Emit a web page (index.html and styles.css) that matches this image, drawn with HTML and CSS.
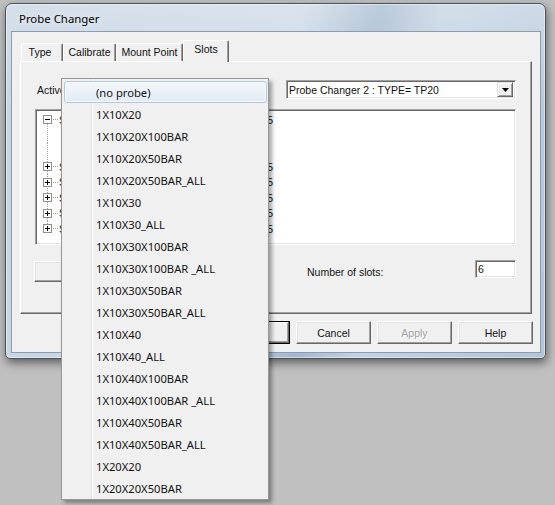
FILE: index.html
```html
<!DOCTYPE html>
<html>
<head>
<meta charset="utf-8">
<title>Probe Changer</title>
<link rel="stylesheet" href="styles.css">
</head>
<body>
<div class="window">
  <div class="titlebar">Probe Changer</div>
  <div class="client">
    <div class="tabs">
      <div class="tab tab-type">Type</div>
      <div class="tab tab-cal">Calibrate</div>
      <div class="tab tab-mount">Mount Point</div>
      <div class="tab tab-slots active">Slots</div>
    </div>
    <div class="panel">
      <div class="row-top">
        <span class="label-active">Active probe changer:</span>
        <div class="combo">
          <span class="combo-text">Probe Changer 2 : TYPE= TP20</span>
          <span class="combo-btn"><svg width="7" height="4" viewBox="0 0 7 4"><path d="M0 0H7L3.5 4Z" fill="#000"/></svg></span>
        </div>
      </div>
      <div class="tree">
        <div class="node first">
          <span class="lines"><svg class="exp" width="9" height="9" viewBox="0 0 9 9"><rect x="0.5" y="0.5" width="8" height="8" fill="#fff" stroke="#8f8f8f"/><path d="M2 4.5H7" stroke="#000"/></svg></span>
          <span class="dash"></span>
          <span class="node-text"><span>Slot 1 : TP20</span><span>Probe 5</span></span>
        </div>
        <div class="node child">
          <span class="lines vert"></span>
          <span class="child-text">Probe</span>
        </div>
        <div class="node child">
          <span class="lines vert"></span>
          <span class="child-text">Tip</span>
        </div>
        <div class="node">
          <span class="lines vert"><svg class="exp" width="9" height="9" viewBox="0 0 9 9"><rect x="0.5" y="0.5" width="8" height="8" fill="#fff" stroke="#8f8f8f"/><path d="M2 4.5H7M4.5 2V7" stroke="#000"/></svg></span>
          <span class="dash"></span>
          <span class="node-text"><span>Slot 2 : TP20</span><span>Probe 5</span></span>
        </div>
        <div class="node">
          <span class="lines vert"><svg class="exp" width="9" height="9" viewBox="0 0 9 9"><rect x="0.5" y="0.5" width="8" height="8" fill="#fff" stroke="#8f8f8f"/><path d="M2 4.5H7M4.5 2V7" stroke="#000"/></svg></span>
          <span class="dash"></span>
          <span class="node-text"><span>Slot 3 : TP20</span><span>Probe 5</span></span>
        </div>
        <div class="node">
          <span class="lines vert"><svg class="exp" width="9" height="9" viewBox="0 0 9 9"><rect x="0.5" y="0.5" width="8" height="8" fill="#fff" stroke="#8f8f8f"/><path d="M2 4.5H7M4.5 2V7" stroke="#000"/></svg></span>
          <span class="dash"></span>
          <span class="node-text"><span>Slot 4 : TP20</span><span>Probe 5</span></span>
        </div>
        <div class="node">
          <span class="lines vert"><svg class="exp" width="9" height="9" viewBox="0 0 9 9"><rect x="0.5" y="0.5" width="8" height="8" fill="#fff" stroke="#8f8f8f"/><path d="M2 4.5H7M4.5 2V7" stroke="#000"/></svg></span>
          <span class="dash"></span>
          <span class="node-text"><span>Slot 5 : TP20</span><span>Probe 5</span></span>
        </div>
        <div class="node last">
          <span class="lines"><svg class="exp" width="9" height="9" viewBox="0 0 9 9"><rect x="0.5" y="0.5" width="8" height="8" fill="#fff" stroke="#8f8f8f"/><path d="M2 4.5H7M4.5 2V7" stroke="#000"/></svg></span>
          <span class="dash"></span>
          <span class="node-text"><span>Slot 6 : TP20</span><span>Probe 5</span></span>
        </div>
      </div>
      <div class="row-bottom">
        <div class="btn btn-edit">Edit Slot</div>
        <span class="label-slots">Number of slots:</span>
        <div class="field">6</div>
      </div>
    </div>
    <div class="buttons">
      <div class="btn default">OK</div>
      <div class="btn">Cancel</div>
      <div class="btn disabled">Apply</div>
      <div class="btn">Help</div>
    </div>
  </div>
</div>

<div class="dropdown">
  <div class="item hot">(no probe)</div>
  <div class="item">1X10X20</div>
  <div class="item">1X10X20X100BAR</div>
  <div class="item">1X10X20X50BAR</div>
  <div class="item">1X10X20X50BAR_ALL</div>
  <div class="item">1X10X30</div>
  <div class="item">1X10X30_ALL</div>
  <div class="item">1X10X30X100BAR</div>
  <div class="item">1X10X30X100BAR _ALL</div>
  <div class="item">1X10X30X50BAR</div>
  <div class="item">1X10X30X50BAR_ALL</div>
  <div class="item">1X10X40</div>
  <div class="item">1X10X40_ALL</div>
  <div class="item">1X10X40X100BAR</div>
  <div class="item">1X10X40X100BAR _ALL</div>
  <div class="item">1X10X40X50BAR</div>
  <div class="item">1X10X40X50BAR_ALL</div>
  <div class="item">1X20X20</div>
  <div class="item">1X20X20X50BAR</div>
</div>
</body>
</html>
```

FILE: styles.css
```css
* { box-sizing: border-box; }
html, body { margin: 0; padding: 0; }
body {
  background: #c0c0c0;
  width: 555px;
  height: 505px;
  overflow: hidden;
  position: relative;
  font-family: "Liberation Sans", Arial, sans-serif;
  font-size: 10.5px;
  color: #111;
}

/* ---------- window frame ---------- */
.window {
  margin: 3px 0 0 5px;
  width: 541px;
  height: 356px;
  border: 1px solid #4d535a;
  border-radius: 7px 7px 5px 5px;
  padding: 0 5px 6px 6px;
  display: flex;
  flex-direction: column;
  background:
    linear-gradient(to bottom, rgba(255,255,255,0.28), rgba(255,255,255,0) 30%),
    linear-gradient(104deg, #c6d4e3 0%, #cbd8e6 48%, #a2b8ce 60%, #c3d2e2 70%, #b2c5d9 100%);
  box-shadow: 1px 4px 10px rgba(0,0,0,0.5), inset 0 0 0 1px rgba(255,255,255,0.45);
}
.titlebar {
  height: 28px;
  display: flex;
  align-items: center;
  padding-left: 7px;
  font-family: "Noto Sans", "Liberation Sans", sans-serif;
  font-size: 11.4px;
  color: #000;
  text-shadow: 0 0 6px rgba(255,255,255,0.9);
}
.client {
  flex: 1;
  background: #f0f0f0;
  box-shadow: 0 0 0 1px #8b9cae;
  padding: 9px 7px 0 8px;
  display: flex;
  flex-direction: column;
}

/* ---------- tabs ---------- */
.tabs {
  display: flex;
  align-items: flex-end;
  height: 20px;
  margin-left: 1px;
  position: relative;
  z-index: 1;
}
.tab {
  height: 18px;
  border-top: 1px solid #fff;
  border-left: 1px solid #fff;
  border-right: 1px solid #696969;
  border-radius: 2px 2px 0 0;
  box-shadow: inset -1px 0 0 #a0a0a0;
  text-align: center;
  line-height: 16px;
  background: #f0f0f0;
}
.tab-type { width: 42px; padding-right: 4px; }
.tab-cal { width: 53px; }
.tab-mount { width: 67px; }
.tab-slots { width: 46px; }
.tab.active {
  height: 22px;
  margin-bottom: -1px;
  line-height: 17px;
}

/* ---------- panel ---------- */
.panel {
  width: 512px;
  height: 253px;
  border: 1px solid;
  border-color: #fff #696969 #696969 #fff;
  box-shadow: inset -1px -1px 0 #a0a0a0;
  padding: 18px 15px 0 14px;
  display: flex;
  flex-direction: column;
}
.row-top {
  height: 19px;
  display: flex;
  align-items: center;
}
.label-active { padding-left: 2px; }
.combo {
  margin-left: auto;
  width: 230px;
  height: 19px;
  background: #fff;
  border: 1px solid;
  border-color: #a0a0a0 #fff #fff #a0a0a0;
  box-shadow: inset 1px 1px 0 #696969, inset -1px -1px 0 #e3e3e3;
  display: flex;
  align-items: center;
  padding: 1px 2px 1px 1px;
}
.combo-text { flex: 1; padding-left: 1px; }
.combo-btn {
  width: 16px;
  height: 15px;
  background: #f0f0f0;
  border: 1px solid;
  border-color: #e3e3e3 #696969 #696969 #e3e3e3;
  box-shadow: inset 1px 1px 0 #fff, inset -1px -1px 0 #a0a0a0;
  display: flex;
  align-items: center;
  justify-content: center;
}

/* ---------- tree ---------- */
.tree {
  margin-top: 10px;
  height: 136px;
  background: #fff;
  border: 1px solid;
  border-color: #a0a0a0 #fff #fff #a0a0a0;
  box-shadow: inset 1px 1px 0 #696969, inset -1px -1px 0 #e3e3e3;
  padding: 2px 2px 2px 7px;
  overflow: hidden;
}
.node {
  height: 15.6px;
  display: flex;
  align-items: center;
  white-space: nowrap;
}
.lines {
  width: 9px;
  height: 100%;
  display: flex;
  align-items: center;
  justify-content: center;
  flex: none;
}
.lines.vert {
  background: repeating-linear-gradient(to bottom, #a0a0a0 0 1px, transparent 1px 2px) no-repeat center / 1px 100%;
}
.node.first .lines {
  background: repeating-linear-gradient(to bottom, #a0a0a0 0 1px, transparent 1px 2px) no-repeat center bottom / 1px 50%;
}
.node.last .lines {
  background: repeating-linear-gradient(to bottom, #a0a0a0 0 1px, transparent 1px 2px) no-repeat center top / 1px 50%;
}
.exp { display: block; }
.dash {
  width: 5px;
  height: 1px;
  margin-left: 1px;
  background: repeating-linear-gradient(to right, #a0a0a0 0 1px, transparent 1px 2px);
  flex: none;
}
.node-text {
  margin-left: 1px;
  width: 214px;
  display: flex;
  justify-content: space-between;
}
.child-text { margin-left: 30px; }

/* ---------- bottom row ---------- */
.row-bottom {
  margin-top: 15px;
  height: 22px;
  display: flex;
  align-items: flex-start;
}
.btn {
  width: 75px;
  height: 23px;
  background: #f0f0f0;
  border: 1px solid;
  border-color: #fff #696969 #696969 #fff;
  box-shadow: inset -1px -1px 0 #a0a0a0, inset 1px 1px 0 #e3e3e3;
  display: flex;
  align-items: center;
  justify-content: center;
}
.btn-edit {
  width: 104px;
  margin-left: -1px;
  margin-top: 1px;
  height: 21px;
}
.label-slots {
  margin-left: 169px;
  margin-top: 6px;
}
.field {
  margin-left: auto;
  width: 41px;
  height: 18px;
  background: #fff;
  border: 1px solid;
  border-color: #a0a0a0 #fff #fff #a0a0a0;
  box-shadow: inset 1px 1px 0 #696969, inset -1px -1px 0 #e3e3e3;
  padding: 2px 0 0 2px;
  line-height: 12px;
}

/* ---------- dialog buttons ---------- */
.buttons {
  margin-top: 7px;
  display: flex;
  justify-content: flex-end;
  gap: 6px;
}
.btn.default { border-color: #000; box-shadow: inset -1px -1px 0 #696969, inset 1px 1px 0 #fff, inset -2px -2px 0 #a0a0a0; }
.btn.disabled { color: #a0a0a0; text-shadow: 1px 1px 0 #fff; }

/* ---------- dropdown popup ---------- */
.dropdown {
  position: absolute;
  left: 61px;
  top: 78px;
  width: 208px;
  height: 422px;
  border: 1px solid #979797;
  background:
    linear-gradient(to right, transparent 29px, #e2e3e3 29px, #e2e3e3 30px, #fff 30px, #fff 31px, transparent 31px),
    #f0f0f0;
  box-shadow: 3px 3px 4px rgba(0,0,0,0.35);
  padding: 2px 1px 0 2px;
  font-family: "Noto Sans", "Liberation Sans", sans-serif;
  font-size: 11.2px;
  color: #111;
}
.item {
  height: 22px;
  display: flex;
  align-items: center;
  padding-left: 31px;
  border: 1px solid transparent;
  border-radius: 3px;
  white-space: nowrap;
}
.item.hot {
  border-color: #b1c9e3;
  background: linear-gradient(to bottom, #f3f7fb, #e2ebf5);
  box-shadow: inset 0 0 0 1px rgba(255,255,255,0.7);
}
```
